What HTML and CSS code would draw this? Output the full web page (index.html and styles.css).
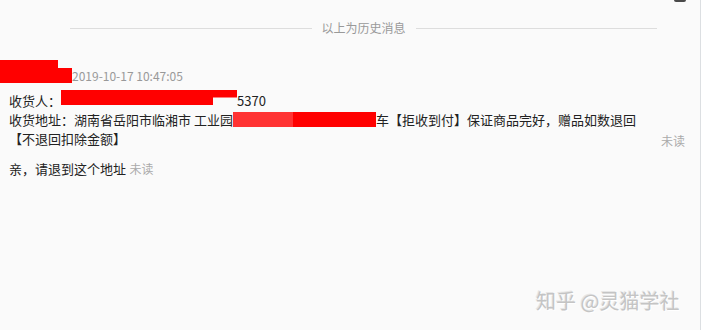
FILE: index.html
```html
<!DOCTYPE html>
<html lang="zh-CN">
<head>
<meta charset="utf-8">
<title>消息</title>
<link rel="stylesheet" href="styles.css">
</head>
<body>
<div class="app">
  <div class="top-mark"></div>
  <div class="divider">
    <span class="line"></span>
    <span class="divider-text">以上为历史消息</span>
    <span class="line"></span>
  </div>

  <div class="msg-head">
    <span class="redact-name"></span>
    <span class="time">2019-10-17 10:47:05</span>
  </div>

  <div class="msg-row">
    <div class="msg-text">
      收货人：<span class="redact redact-phone"></span>5370<br>
      收货地址：湖南省岳阳市临湘市 工业园<span class="redact redact-addr"></span>车【拒收到付】保证商品完好，赠品如数退回<br>
      【不退回扣除金额】
    </div>
    <span class="status">未读</span>
  </div>

  <div class="msg-row2">
    <span class="msg-text2">亲，请退到这个地址</span> <span class="status2">未读</span>
  </div>

  <div class="watermark">知乎 @灵猫学社</div>
</div>
</body>
</html>
```

FILE: styles.css
```css
html, body {
  margin: 0;
  padding: 0;
  background: #ffffff;
}

body {
  width: 702px;
  height: 330px;
  overflow: hidden;
  font-family: "Noto Sans CJK SC", "Liberation Sans", sans-serif;
}

.app {
  position: relative;
  width: 700px;
  height: 330px;
  background: #fafafa;
  border-right: 1px solid #dcdfe2;
}

.top-mark {
  position: absolute;
  left: 674px;
  top: 0;
  width: 12px;
  height: 2px;
  background: #4a4a4a;
  border-radius: 0 0 3px 3px;
}

.divider {
  display: flex;
  align-items: center;
  height: 20px;
  padding-top: 18px;
  margin: 0 43px 0 70px;
}

.divider .line {
  flex: 1;
  height: 1px;
  background: #dddddd;
}

.divider-text {
  padding: 0 10px;
  font-size: 12px;
  line-height: 20px;
  color: #999999;
}

.msg-head {
  display: flex;
  align-items: flex-end;
  margin-top: 22px;
  height: 23px;
}

.redact-name {
  display: inline-block;
  width: 72px;
  height: 23px;
  background:
    linear-gradient(#ff0000, #ff0000) 0 0 / 58px 17px no-repeat,
    linear-gradient(#ff0000, #ff0000) 0 8px / 72px 15px no-repeat;
}

.time {
  font-size: 12px;
  line-height: 16px;
  color: #999999;
  margin-bottom: -1px;
}

.msg-row {
  display: flex;
  align-items: flex-end;
  margin-top: 8px;
  padding: 0 15px 0 9px;
}

.msg-text {
  font-size: 13px;
  line-height: 19px;
  color: #222222;
}

.redact {
  display: inline-block;
  vertical-align: top;
  height: 15px;
}

.redact-phone {
  width: 176px;
  margin-top: -1px;
  background:
    linear-gradient(#ff0000, #ff0000) 0 0 / 152px 100% no-repeat,
    linear-gradient(#ff0000, #ff0000) 0 0 / 100% 50% no-repeat;
}

.redact-addr {
  width: 143px;
  margin-top: 2px;
  background:
    linear-gradient(#ff3333, #ff3333) 0 0 / 60px 100% no-repeat,
    linear-gradient(#ff0000, #ff0000) 0 0 / 100% 100% no-repeat;
}

.status {
  margin-left: auto;
  font-size: 12px;
  line-height: 19px;
  color: #aaaaaa;
  margin-bottom: -2px;
}

.msg-row2 {
  margin-top: 10px;
  padding-left: 9px;
  line-height: 19px;
}

.msg-text2 {
  font-size: 13px;
  color: #222222;
}

.status2 {
  font-size: 12px;
  color: #aaaaaa;
}

.watermark {
  position: absolute;
  left: 536px;
  top: 288px;
  font-size: 20px;
  line-height: 26px;
  color: #c4c4c4;
  text-shadow: 1px 1px 0 #ffffff, -1px -1px 0 #e6e6e6;
  white-space: nowrap;
}
```
